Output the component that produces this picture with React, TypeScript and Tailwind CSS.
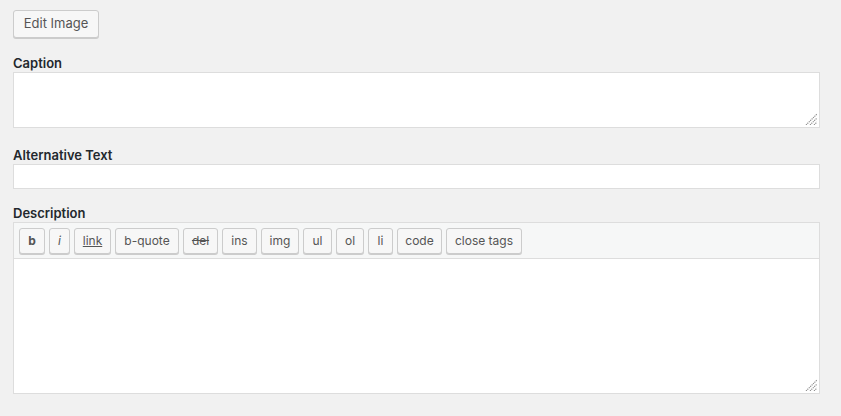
import React from "react";

const Grip = () => (
  <svg
    className="absolute right-[2px] bottom-[2px]"
    width="12"
    height="12"
    viewBox="0 0 12 12"
  >
    <g stroke="#8a8a8a" strokeWidth="1.1" strokeDasharray="1.2 0.8">
      <line x1="1" y1="12" x2="12" y2="1" />
      <line x1="5" y1="12" x2="12" y2="5" />
      <line x1="9" y1="12" x2="12" y2="9" />
    </g>
  </svg>
);

const tags: { label: string; w: string; cls?: string }[] = [
  { label: "b", w: "w-[26px]", cls: "font-bold" },
  { label: "i", w: "w-[21px]", cls: "italic" },
  { label: "link", w: "w-[37px]", cls: "underline" },
  { label: "b-quote", w: "w-[64px]" },
  { label: "del", w: "w-[35px]", cls: "line-through" },
  { label: "ins", w: "w-[35px]" },
  { label: "img", w: "w-[38px]" },
  { label: "ul", w: "w-[29px]" },
  { label: "ol", w: "w-[28px]" },
  { label: "li", w: "w-[25px]" },
  { label: "code", w: "w-[45px]" },
  { label: "close tags", w: "w-[76px]" },
];

export default function App() {
  return (
    <div className="min-h-[416px] w-[841px] bg-[#f1f1f1] px-[13px] pt-[10px] font-['Inter',sans-serif] text-[13px] text-[#23282d]">
      <button className="h-[28px] w-[86px] rounded-[3px] border border-[#cccccc] bg-[#f7f7f7] text-[13px] text-[#555555] shadow-[0_1px_0_#cccccc]">
        Edit Image
      </button>

      <div className="mt-[16px] w-[807px]">
        <div className="h-[18px] font-semibold leading-[18px]">Caption</div>
        <div className="relative h-[56px] border border-[#dddddd] bg-white">
          <Grip />
        </div>
      </div>

      <div className="mt-[18px] w-[807px]">
        <div className="h-[18px] font-semibold leading-[18px]">Alternative Text</div>
        <div className="h-[25px] border border-[#dddddd] bg-white" />
      </div>

      <div className="mt-[15px] w-[807px]">
        <div className="h-[18px] font-semibold leading-[18px]">Description</div>
        <div className="flex h-[172px] flex-col border border-[#dddddd] bg-white">
          <div className="flex h-[36px] items-start gap-[4px] border-b border-[#dddddd] bg-[#f6f7f7] pl-[5px] pt-[5px]">
            {tags.map((t) => (
              <div
                key={t.label}
                className={`flex h-[26px] items-center justify-center rounded-[3px] border border-[#cccccc] bg-[#f7f7f7] text-[12px] text-[#555555] shadow-[0_1px_0_#cccccc] ${t.w}`}
              >
                <span className={t.cls}>{t.label}</span>
              </div>
            ))}
          </div>
          <div className="relative flex-1 bg-white">
            <Grip />
          </div>
        </div>
      </div>
    </div>
  );
}
